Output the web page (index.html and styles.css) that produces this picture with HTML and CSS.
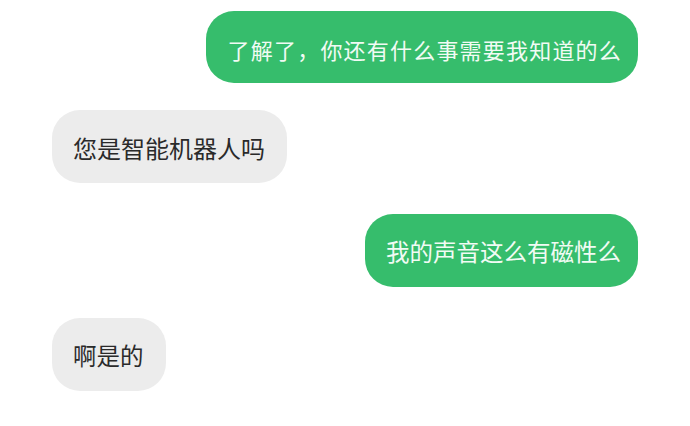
FILE: index.html
```html
<!DOCTYPE html>
<html lang="zh-CN">
<head>
    <meta charset="UTF-8">
    <meta name="viewport" content="width=device-width, initial-scale=1.0">
    <title>聊天</title>
    <link rel="stylesheet" href="styles.css">
</head>
<body>

    <!-- Chat -->
    <div class="chat">
        <div class="row me">
            <div class="bubble green long">了解了，你还有什么事需要我知道的么</div>
        </div>
        <div class="row bot first">
            <div class="bubble gray big">您是智能机器人吗</div>
        </div>
        <div class="row me">
            <div class="bubble green">我的声音这么有磁性么</div>
        </div>
        <div class="row bot">
            <div class="bubble gray">啊是的</div>
        </div>
    </div>

</body>
</html>
```

FILE: styles.css
```css
/* Global Styles */
body {
    margin: 0;
    padding: 0;
    background: #ffffff;
    font-family: "Noto Sans CJK SC", "Noto Sans", sans-serif;
}

/* Chat Layout */
.chat {
    display: flex;
    flex-direction: column;
    gap: 31px;
    padding: 11px 52px 0 52px;
}

.row {
    display: flex;
}

.row.me {
    justify-content: flex-end;
}

.row.bot {
    justify-content: flex-start;
}

.row.first {
    margin-top: -4px;
}

/* Bubbles */
.bubble {
    height: 73px;
    display: flex;
    align-items: center;
    box-sizing: border-box;
    border-radius: 28px;
    font-size: 23.5px;
    line-height: 1;
    white-space: nowrap;
    padding-top: 3px;
    flex-shrink: 0;
}

.bubble.green {
    background: #36bd6c;
    color: #f1fbf4;
    padding-left: 21px;
    padding-right: 17px;
}

.bubble.gray {
    background: #ececec;
    color: #2a2a2a;
    padding-left: 21px;
    padding-right: 22px;
}

.bubble.long {
    font-size: 22px;
    letter-spacing: 1.2px;
    height: 72px;
    padding-left: 22px;
    padding-right: 16px;
}

.bubble.big {
    font-size: 24px;
}
```
